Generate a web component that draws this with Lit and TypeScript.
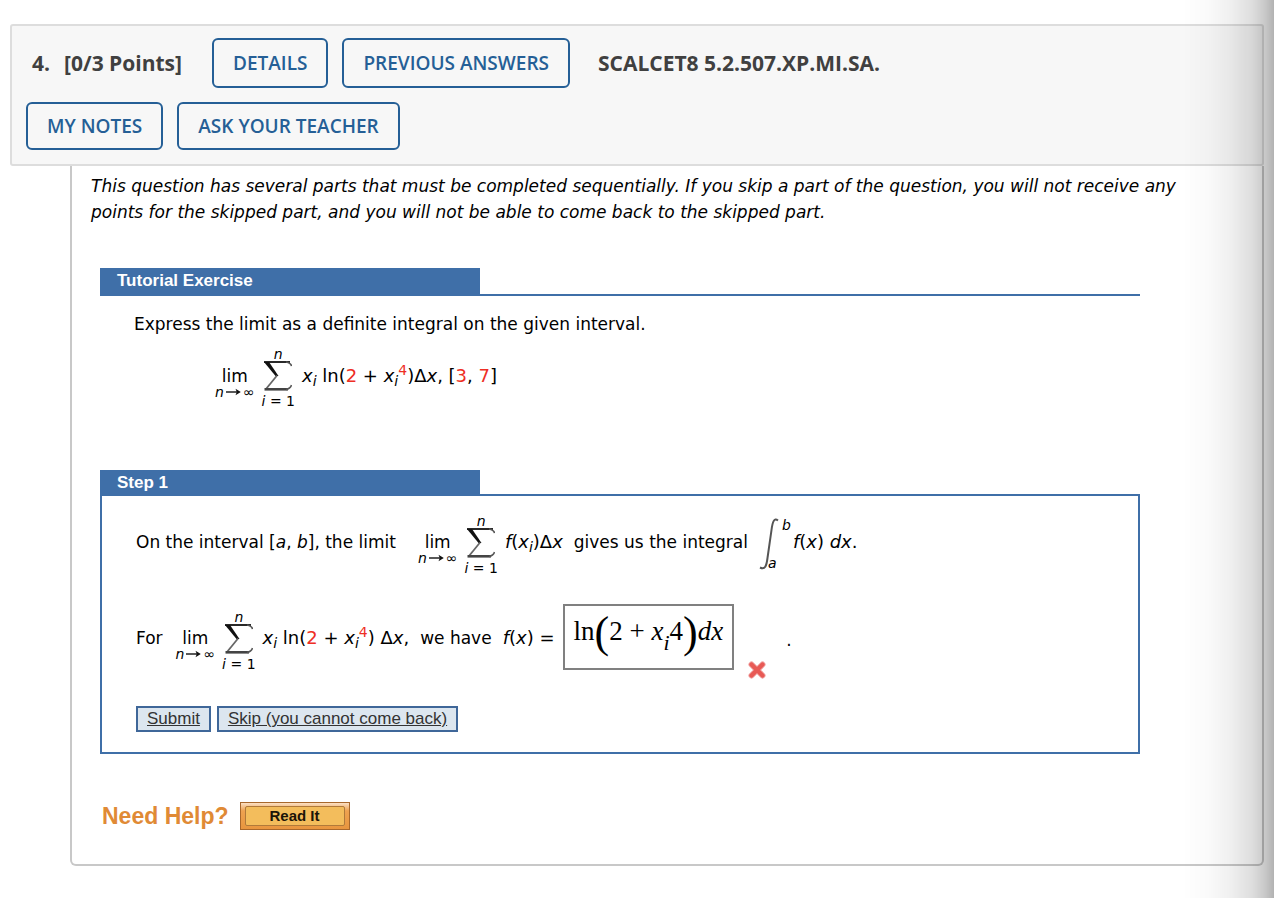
import { LitElement, html, css } from "lit";
import { customElement } from "lit/decorators.js";

const sigma = html`<svg class="sigma" viewBox="0 0 28 30" width="28" height="30" aria-label="sum">
  <path d="M0 1H26" fill="none" stroke="#111" stroke-width="1.800" />
  <path d="M22 1Q27 2 27.500 5" fill="none" stroke="#555" stroke-width="1.600" />
  <path d="M0 1H5L14.500 15H11.500Z" fill="#111" />
  <path d="M13 14.500L2 28" fill="none" stroke="#666" stroke-width="1.800" />
  <path d="M0.500 28.300H24" fill="none" stroke="#444" stroke-width="2.600" />
  <path d="M22 28.500Q26.500 27.500 27.500 24" fill="none" stroke="#555" stroke-width="1.600" />
</svg>`;

const arrow = html`<svg class="arrow" viewBox="0 0 15 8" width="15" height="8" aria-label="to">
  <path d="M0 4H13" fill="none" stroke="#111" stroke-width="1.400" />
  <path d="M9.500 0.800L14.800 4L9.500 7.200L10.800 4Z" fill="#111" />
</svg>`;

const limitSum = html`<span class="limit"
    ><span>lim</span
    ><span class="under"><i>n</i>${arrow}<span>∞</span></span></span
  ><span class="sum"><i>n</i>${sigma}<span class="from"><i>i</i> = 1</span></span>`;

@customElement("app-root")
export class AppRoot extends LitElement {
  static styles = css`
    :host {
      display: block;
      min-height: 100vh;
      box-sizing: border-box;
      padding: 24px 10px 32px;
      background: #fff;
      color: #000;
      font: 17px/26px "DejaVu Sans", Verdana, sans-serif;
    }
    * {
      box-sizing: border-box;
    }
    header {
      padding: 12px 14px 14px;
      border: 2px solid #ddd;
      border-radius: 3px;
      background: #f7f7f7;
      color: #404040;
      font-family: "Open Sans", sans-serif;
    }
    .row {
      display: flex;
      flex-wrap: wrap;
      align-items: center;
      gap: 14px;
    }
    .row + .row {
      margin-top: 14px;
    }
    h1,
    .code {
      margin: 0;
      font-size: 21px;
      font-weight: 700;
      line-height: 28px;
    }
    h1 {
      display: flex;
      gap: 14px;
      padding: 0 16px 0 6px;
    }
    .code {
      padding-left: 14px;
    }
    .action {
      height: 48px;
      padding: 0 19px;
      border: 2px solid #255f96;
      border-radius: 6px;
      background: transparent;
      color: #255f96;
      font: 600 19px/24px "Open Sans", sans-serif;
    }
    .tall {
      height: 50px;
    }
    .panel {
      margin-left: 60px;
      padding: 7px 28px 34px;
      border: 2px solid #c8c8c8;
      border-top: 0;
      border-radius: 0 0 6px 6px;
    }
    .intro {
      margin: 0 0 43px -9px;
      padding-right: 28px;
      font-style: italic;
    }
    section {
      max-width: 1040px;
    }
    h2 {
      width: 380px;
      max-width: 100%;
      height: 26px;
      margin: 0;
      padding: 0 17px;
      background: #3f6fa8;
      color: #fff;
      font: 700 17px/25px "Liberation Sans", Arial, sans-serif;
    }
    .step h2 {
      height: 24px;
    }
    .exercise {
      border-top: 2px solid #3f6fa8;
      margin-bottom: 62px;
      padding: 15px 34px 0;
    }
    .exercise p {
      margin: 0 0 10px;
    }
    .formula,
    .line {
      display: flex;
      align-items: center;
      flex-wrap: wrap;
    }
    .formula {
      padding-left: 81px;
    }
    .body {
      padding: 15px 34px 20px;
      border: 2px solid #3f6fa8;
    }
    .line {
      min-height: 66px;
      margin-bottom: 27px;
    }
    .limit,
    .sum {
      display: inline-flex;
      flex-direction: column;
      align-items: center;
      line-height: 20px;
    }
    .limit {
      padding-top: 8px;
    }
    .under,
    .sum {
      font-size: 14px;
      line-height: 12px;
    }
    .under {
      display: flex;
      align-items: center;
      gap: 2px;
    }
    .sum {
      margin: 0 7px;
    }
    .sum > i {
      line-height: 14px;
    }
    .from {
      padding-top: 3px;
      line-height: 14px;
      white-space: pre;
    }
    svg {
      display: block;
      flex: none;
    }
    .expr,
    .words {
      padding-bottom: 4px;
      white-space: pre;
    }
    .expr {
      font-size: 18px;
    }
    .lead {
      padding-right: 22px;
    }
    .short {
      padding-right: 13px;
    }
    .gap {
      margin: 0 11px;
    }
    .red {
      color: #ee2e24;
    }
    sub,
    sup {
      font-size: 14px;
      line-height: 0;
    }
    sub {
      vertical-align: -4px;
    }
    sup {
      vertical-align: 7px;
    }
    .integral {
      display: flex;
      margin-right: 2px;
      font-size: 14px;
      line-height: 14px;
    }
    .bounds {
      display: flex;
      flex-direction: column;
      justify-content: space-between;
      margin-left: -11px;
    }
    .bounds i:first-child {
      padding-left: 14px;
    }
    .answer {
      display: flex;
      align-items: center;
      height: 66px;
      margin: 0 0 6px 8px;
      padding: 0 9px 12px;
      border: 2px solid #808080;
      font: 27px/30px "Liberation Serif", "Times New Roman", serif;
      white-space: pre;
    }
    .answer sub {
      font-size: 22px;
      vertical-align: -10px;
    }
    .paren {
      padding-top: 4px;
      font-size: 44px;
      line-height: 44px;
    }
    .wrong {
      align-self: flex-end;
      margin: 0 20px -3px 14px;
    }
    .buttons {
      display: flex;
      flex-wrap: wrap;
      gap: 6px;
      padding-top: 3px;
    }
    .buttons button {
      height: 26px;
      padding: 0 9px;
      border: 2px solid #3f6799;
      background: #dce6ef;
      color: #333;
      font: 17px/20px "Liberation Sans", Arial, sans-serif;
      text-decoration: underline;
    }
    .help {
      display: flex;
      align-items: center;
      gap: 11px;
      margin-top: 48px;
      padding-left: 2px;
      color: #e08a35;
      font: 700 23px/28px "Liberation Sans", Arial, sans-serif;
    }
    .read {
      width: 110px;
      height: 28px;
      padding: 3px 4px;
      border: 1px solid #a8682c;
      background: linear-gradient(#fbe0c4, #eea250 30%, #e8963f);
    }
    .read span {
      display: block;
      border: 1px solid #b07a3a;
      border-radius: 2px;
      background: #f3bd5c;
      color: #1c1408;
      font: 700 15px/18px "Liberation Sans", Arial, sans-serif;
    }
    .shade {
      position: fixed;
      inset: 0 0 0 auto;
      width: 92px;
      pointer-events: none;
      background: linear-gradient(
        to right,
        rgba(0, 0, 0, 0),
        rgba(0, 0, 0, 0.02) 28%,
        rgba(0, 0, 0, 0.06) 52%,
        rgba(0, 0, 0, 0.13) 76%,
        rgba(0, 0, 0, 0.21) 90%,
        rgba(0, 0, 0, 0.3)
      );
    }
  `;

  render() {
    return html`
      <header>
        <div class="row">
          <h1><span>4.</span><span>[0/3 Points]</span></h1>
          <button class="action tall">DETAILS</button>
          <button class="action tall">PREVIOUS ANSWERS</button>
          <span class="code">SCALCET8 5.2.507.XP.MI.SA.</span>
        </div>
        <div class="row">
          <button class="action">MY NOTES</button>
          <button class="action">ASK YOUR TEACHER</button>
        </div>
      </header>
      <main class="panel">
        <p class="intro">
          This question has several parts that must be completed sequentially. If you skip a part of the question, you
          will not receive any points for the skipped part, and you will not be able to come back to the skipped part.
        </p>
        <section>
          <h2>Tutorial Exercise</h2>
          <div class="exercise">
            <p>Express the limit as a definite integral on the given interval.</p>
            <div class="formula">
              ${limitSum}
              <span class="expr"><i>x</i><sub><i>i</i></sub> ln(<span class="red">2</span> + <i>x</i><sub><i>i</i></sub><sup class="red">4</sup>)Δ<i>x</i>, [<span class="red">3</span>, <span class="red">7</span>]</span>
            </div>
          </div>
        </section>
        <section class="step">
          <h2>Step 1</h2>
          <div class="body">
            <div class="line">
              <span class="words lead">On the interval [<i>a</i>, <i>b</i>], the limit</span>
              ${limitSum}
              <span class="expr"><i>f</i>(<i>x</i><sub><i>i</i></sub>)Δ<i>x</i></span>
              <span class="words gap">gives us the integral</span>
              <span class="integral">
                <svg viewBox="0 0 20 52" width="20" height="52" aria-label="integral">
                  <path
                    d="M19 2.500C15 -0.500 13.500 4 12.500 12L8.500 40C7.500 48 6 52 1 49.500"
                    fill="none"
                    stroke="#555"
                    stroke-width="2"
                  />
                </svg>
                <span class="bounds"><i>b</i><i>a</i></span>
              </span>
              <span class="expr"><i>f</i>(<i>x</i>) <i>dx</i>.</span>
            </div>
            <div class="line">
              <span class="words short">For</span>
              ${limitSum}
              <span class="expr"><i>x</i><sub><i>i</i></sub> ln(<span class="red">2</span> + <i>x</i><sub><i>i</i></sub><sup class="red">4</sup>) Δ<i>x</i>,</span>
              <span class="words gap">we have</span>
              <span class="expr"><i>f</i>(<i>x</i>) =</span>
              <div class="answer" role="textbox" tabindex="0" aria-label="f(x)"><span>ln</span><span class="paren">(</span><span>2 + <i>x</i><sub><i>i</i></sub>4</span><span class="paren">)</span><i>dx</i></div>
              <svg class="wrong" viewBox="0 0 18 18" width="18" height="18" aria-label="incorrect">
                <path d="M3.500 3.500L14.500 14.500M14.500 3.500L3.500 14.500" stroke="#f0a0a0" stroke-width="6" stroke-linecap="round" />
                <path d="M3.500 3.500L14.500 14.500M14.500 3.500L3.500 14.500" stroke="#e85a55" stroke-width="4.200" stroke-linecap="round" />
              </svg>
              <span>.</span>
            </div>
            <div class="buttons">
              <button>Submit</button>
              <button>Skip (you cannot come back)</button>
            </div>
          </div>
        </section>
        <div class="help">
          <span>Need Help?</span>
          <button class="read"><span>Read It</span></button>
        </div>
      </main>
      <div class="shade"></div>
    `;
  }
}
